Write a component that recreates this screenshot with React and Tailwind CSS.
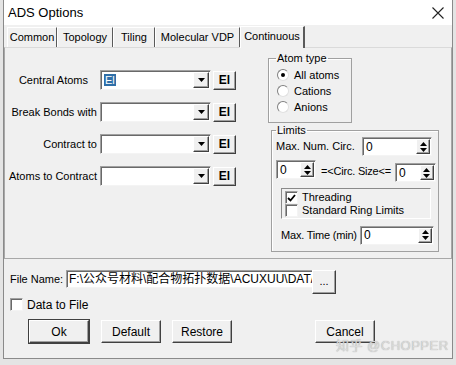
import { useState } from "react";

const font = { fontFamily: '"Liberation Sans", "Noto Sans CJK SC", sans-serif' };

const sunken = "bg-white border border-t-[#a0a0a0] border-l-[#a0a0a0] border-r-[#f4f4f4] border-b-[#f4f4f4] shadow-[inset_1px_1px_0_#696969]";
const raised = "bg-[#f0f0f0] border border-t-white border-l-white border-r-[#404040] border-b-[#404040] shadow-[inset_-1px_-1px_0_#a0a0a0]";

function Arrow({ up }) {
    return (
        <svg width="7" height="4" viewBox="0 0 7 4">
            <path d={up ? "M0 4 L3.5 0 L7 4 Z" : "M0 0 L7 0 L3.5 4 Z"} fill="#000" />
        </svg>
    );
}

function Combo({ value }) {
    return (
        <div className={`${sunken} w-[111px] h-[20px] flex items-center pl-[3px] pr-[1px]`}>
            <div className="flex-1 text-[11px] leading-none">
                {value ? <span className="bg-[#2f6fa8] text-white px-px">{value}</span> : null}
            </div>
            <div className={`${raised} w-[16px] h-[16px] flex items-center justify-center`}>
                <Arrow />
            </div>
        </div>
    );
}

function Spin({ w, value = "0" }) {
    return (
        <div className={`${sunken} shrink-0 h-[19px] flex items-center pl-[3px] pr-[1px]`} style={{ width: w }}>
            <div className="flex-1 text-[12px] leading-none">{value}</div>
            <div className={`${raised} w-[14px] h-[15px] flex flex-col items-center justify-center gap-[2px]`}>
                <Arrow up />
                <Arrow />
            </div>
        </div>
    );
}

function Radio({ checked, label }) {
    return (
        <div className="h-[16px] flex items-center">
            <div className="w-[12px] h-[12px] rounded-full bg-white border border-t-[#808080] border-l-[#808080] border-r-[#e0e0e0] border-b-[#e0e0e0] flex items-center justify-center">
                {checked ? <div className="w-[4px] h-[4px] rounded-full bg-black" /> : null}
            </div>
            <span className="ml-[5px] whitespace-nowrap">{label}</span>
        </div>
    );
}

function Check({ checked, label }) {
    return (
        <div className="flex items-center h-[13px]">
            <div className={`${sunken} shrink-0 w-[13px] h-[13px] flex items-center justify-center`}>
                {checked ? (
                    <svg width="9" height="8" viewBox="0 0 9 8">
                        <path d="M1 4 L3.5 6.5 L8 1" stroke="#000" strokeWidth="1.8" fill="none" />
                    </svg>
                ) : null}
            </div>
            <span className="ml-[4px] whitespace-nowrap">{label}</span>
        </div>
    );
}

function Btn({ label, def }) {
    return (
        <div className={`w-[60px] h-[23px] flex items-center justify-center text-[12px] ${def ? "outline outline-1 outline-[#404040]" : ""} ${raised}`}>
            {label}
        </div>
    );
}

function Row({ label, value, pr }) {
    return (
        <div className="h-[20px] flex items-center">
            <div className={`w-[92px] text-right whitespace-nowrap ${pr || ""}`}>{label}</div>
            <div className="ml-[3px]"><Combo value={value} /></div>
            <div className={`${raised} ml-[2px] w-[23px] h-[19px] flex items-center justify-center font-bold text-[12px]`}>El</div>
        </div>
    );
}

const tabs = [
    { name: "Common", w: "w-[50px]" },
    { name: "Topology", w: "w-[56px]" },
    { name: "Tiling", w: "w-[42px]" },
    { name: "Molecular VDP", w: "w-[85px]" },
];

export default function App() {
    const [active] = useState("Continuous");

    return (
        <div className="w-[456px] h-[365px] bg-[#e4e4e4] text-[11px] text-black overflow-hidden" style={font}>
            <div className="ml-[3px] w-[450px] h-[359px] border border-t-0 border-[#8a8a8a] bg-[#f0f0f0] flex flex-col relative">
                <div className="h-[25px] bg-white flex items-center justify-between pl-[4px] pr-[8px]">
                    <span className="text-[13px]">ADS Options</span>
                    <svg width="12" height="12" viewBox="0 0 12 12">
                        <path d="M0.5 0.5 L11.5 11.5 M11.5 0.5 L0.5 11.5" stroke="#222" strokeWidth="1.1" />
                    </svg>
                </div>

                <div className="h-[22px] flex items-end pl-[3px]">
                    {tabs.map((t) => (
                        <div key={t.name} className={`${t.w} h-[20px] flex items-center justify-center border-l border-l-white border-r border-r-[#5a5a5a] border-t border-t-white text-[11px] whitespace-nowrap`}>
                            {t.name}
                        </div>
                    ))}
                    <div className="w-[65px] h-[22px] -mb-px relative z-10 bg-[#f0f0f0] flex items-center justify-center pb-[2px] border-l border-l-white border-t border-t-white border-r-2 border-r-[#5a5a5a]">
                        {active}
                    </div>
                </div>

                <div className="h-[212px] border border-[#a8a8a8] border-t-[#dadada] flex">
                    <div className="w-[263px] flex flex-col gap-[12px] mt-[22px]">
                        <Row label="Central Atoms" value="El" pr="pr-[9px]" />
                        <Row label="Break Bonds with" />
                        <Row label="Contract to" />
                        <Row label="Atoms to Contract" />
                    </div>

                    <div className="flex flex-col">
                        <fieldset className="mt-[4px] w-[84px] h-[71px] border border-[#a0a0a0] shadow-[inset_1px_1px_0_#fff] px-0 pl-[8px]">
                            <legend className="ml-[-1px] px-[1px] leading-[13px]">Atom type</legend>
                            <div className="mt-[2px]">
                                <Radio checked label="All atoms" />
                                <Radio label="Cations" />
                                <Radio label="Anions" />
                            </div>
                        </fieldset>

                        <fieldset className="mt-[1px] ml-[3px] w-[168px] h-[128px] border border-[#a0a0a0] shadow-[inset_1px_1px_0_#fff] px-0 pl-[4px]">
                            <legend className="px-[1px] leading-[13px]">Limits</legend>
                            <div className="flex items-center h-[19px]">
                                <div className="w-[86px] whitespace-nowrap">Max. Num. Circ.</div>
                                <Spin w="70px" />
                            </div>
                            <div className="flex items-start mt-[4px]">
                                <Spin w="40px" />
                                <span className="ml-[5px] mt-[3px] whitespace-nowrap tracking-[-0.2px]">=&lt;Circ. Size&lt;=</span>
                                <div className="ml-[4px] mt-[3px]"><Spin w="41px" /></div>
                            </div>
                            <div className="ml-[5px] mt-[6px] w-[150px] h-[31px] border border-t-[#8a8a8a] border-l-[#8a8a8a] border-r-white border-b-white pl-[3px] pt-[2px]">
                                <Check checked label="Threading" />
                                <Check label="Standard Ring Limits" />
                            </div>
                            <div className="flex items-center h-[20px] mt-[6px] pl-[5px]">
                                <div className="w-[79px] whitespace-nowrap tracking-[-0.2px]">Max. Time (min)</div>
                                <Spin w="74px" />
                            </div>
                        </fieldset>
                    </div>
                </div>

                <div className="flex-1 pl-[6px]">
                    <div className="flex items-start mt-[11px]">
                        <div className="w-[56px] h-[18px] flex items-center whitespace-nowrap">File Name:</div>
                        <div className={`${sunken} w-[247px] h-[18px] flex items-center pl-[2px] overflow-hidden whitespace-nowrap text-[12px]`}>
                            F:\公众号材料\配合物拓扑数据\ACUXUU\DAT/
                        </div>
                        <div className={`${raised} -ml-px w-[24px] h-[24px] flex items-end justify-center pb-[4px]`}>...</div>
                    </div>
                    <div className="mt-[4px] text-[12px]">
                        <Check label="Data to File" />
                    </div>
                    <div className="flex mt-[9px] pl-[19px]">
                        <Btn label="Ok" def />
                        <div className="ml-[12px]"><Btn label="Default" /></div>
                        <div className="ml-[11px]"><Btn label="Restore" /></div>
                        <div className="ml-[83px]"><Btn label="Cancel" /></div>
                    </div>
                </div>

                <div className="absolute left-[332px] top-[339px] text-[13px] leading-[14px] text-[#dadada] tracking-[0.5px] [text-shadow:0_0_1px_#a0a0a0]">
                    知乎 @CHOPPER
                </div>
            </div>
        </div>
    );
}
